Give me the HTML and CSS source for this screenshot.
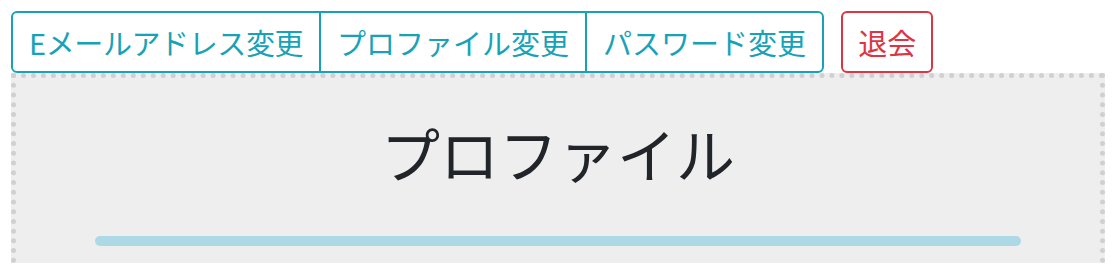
FILE: index.html
```html
<!DOCTYPE html>
<html lang="ja">
<head>
  <meta charset="UTF-8">
  <meta name="viewport" content="width=device-width, initial-scale=1.0">
  <title>プロファイル</title>
  <link rel="stylesheet" href="styles.css">
</head>
<body>
<div class="toolbar">
  <div class="btn-group">
    <a class="btn btn-info btn-email" href="#">Eメールアドレス変更</a>
    <a class="btn btn-info" href="#">プロファイル変更</a>
    <a class="btn btn-info" href="#">パスワード変更</a>
  </div>
  <a class="btn btn-danger" href="#">退会</a>
</div>
<div class="panel">
  <h1>プロファイル</h1>
  <div class="bar"></div>
</div>
</body>
</html>
```

FILE: styles.css
```css
body {
  margin: 0;
  padding: 11px 12px 0 11px;
  font-family: "Noto Sans CJK JP", "Noto Sans", sans-serif;
  color: #212529;
  background-color: #fff;
}
.toolbar {
  display: flex;
  gap: 17px;
}
.btn-group {
  display: flex;
}
.btn {
  display: inline-block;
  padding: 8px 16px;
  font-size: 29px;
  line-height: 42px;
  border: 2px solid;
  border-radius: 6px;
  text-decoration: none;
  background-color: #fff;
}
.btn-email {
  letter-spacing: -0.4px;
}
.btn-info {
  color: #17a2b8;
  border-color: #17a2b8;
}
.btn-danger {
  padding: 8px 15px;
  color: #dc3545;
  border-color: #dc3545;
}
.btn-group .btn {
  border-radius: 0;
}
.btn-group .btn + .btn {
  margin-left: -2px;
}
.btn-group .btn:first-child {
  border-radius: 6px 0 0 6px;
}
.btn-group .btn:last-child {
  border-radius: 0 6px 6px 0;
}
.panel {
  background-color: #eee;
  border: 5px dotted #d0d0d0;
  border-bottom: none;
  padding: 40px 79px 17px;
}
h1 {
  margin: 0 0 47px;
  font-size: 59px;
  font-weight: normal;
  line-height: 1.2;
  text-align: center;
}
.bar {
  height: 10px;
  border-radius: 5px;
  background-color: #add8e6;
}
```
